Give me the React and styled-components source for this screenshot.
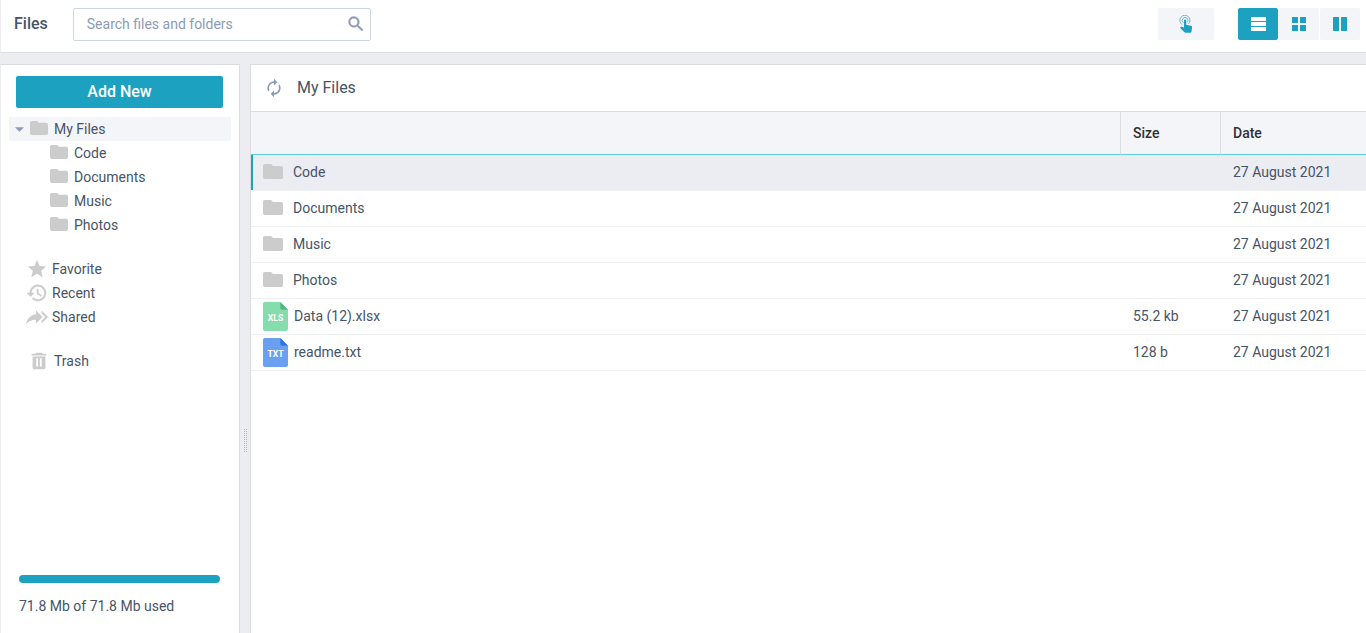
import React, { useState } from "react";
import styled, { createGlobalStyle } from "styled-components";

const color = {
  primary: "#1ca1c1",
  text: "#475466",
  muted: "#8d9bb3",
  line: "#dadee0",
  soft: "#f4f5f9",
  page: "#ebedf0",
  icon: "#cccccc",
};

const GlobalStyle = createGlobalStyle`
  *, *::before, *::after { box-sizing: border-box; }
  body {
    margin: 0;
    background: ${color.page};
    color: ${color.text};
    font-family: Roboto, "Liberation Sans", sans-serif;
    font-size: 14px;
    line-height: 24px;
  }
  button, input { font: inherit; color: inherit; }
`;

const Page = styled.div`
  display: flex;
  flex-direction: column;
  min-height: 100vh;
`;

const Toolbar = styled.header`
  display: flex;
  align-items: center;
  height: 53px;
  padding: 0 6px 4px 13px;
  background: #fff;
  border-bottom: 1px solid ${color.line};
  border-left: 1px solid ${color.page};
`;

const Title = styled.h1`
  margin: 0 25px 0 0;
  font-size: 16px;
  font-weight: 500;
  color: ${color.text};
`;

const SearchBox = styled.label`
  display: flex;
  align-items: center;
  width: 298px;
  height: 33px;
  padding: 0 4px 0 13px;
  border: 1px solid #ccd7e6;
  border-radius: 2px;
  color: ${color.muted};
`;

const SearchInput = styled.input`
  flex: 1;
  min-width: 0;
  padding: 0;
  border: 0;
  outline: 0;
  background: none;
  &::placeholder { color: ${color.muted}; opacity: 1; }
`;

const Actions = styled.div`
  display: flex;
  gap: 24px;
  margin-left: auto;
`;

const ModeGroup = styled.div`
  display: flex;
  gap: 1px;
`;

const ToolButton = styled.button`
  display: flex;
  align-items: center;
  justify-content: center;
  width: ${(p) => (p.$wide ? 56 : 40)}px;
  height: 32px;
  padding: 0;
  border: 0;
  border-radius: 2px;
  background: ${(p) => (p.$active ? color.primary : color.soft)};
  color: ${(p) => (p.$active ? "#fff" : color.primary)};
  cursor: pointer;
`;

const Body = styled.div`
  display: flex;
  flex: 1;
  padding-top: 11px;
`;

const Sidebar = styled.aside`
  display: flex;
  flex-direction: column;
  flex: 0 0 240px;
  padding: 11px 8px 15px;
  background: #fff;
  border: 1px solid ${color.line};
  border-left-color: ${color.page};
  border-bottom: 0;
`;

const AddButton = styled.button`
  height: 32px;
  margin: 0 8px 9px 7px;
  border: 0;
  border-radius: 2px;
  background: ${color.primary};
  color: #fff;
  font-size: 16px;
  font-weight: 500;
  cursor: pointer;
`;

const TreeGroup = styled.nav`
  display: flex;
  flex-direction: column;
  margin-bottom: 20px;
`;

const TreeItem = styled.a`
  display: flex;
  align-items: center;
  gap: 6px;
  height: 24px;
  padding-left: ${(p) => p.$indent}px;
  background: ${(p) => (p.$selected ? color.soft : "none")};
  color: inherit;
  text-decoration: none;
`;

const PlainItem = styled(TreeItem)`
  gap: 4px;
`;

const Icon = styled.svg`
  display: block;
  flex: none;
  fill: currentColor;
  color: ${(p) => p.$color || "inherit"};
`;

const FolderIcon = styled(Icon)`
  margin-bottom: 2px;
`;

const Storage = styled.div`
  display: flex;
  flex-direction: column;
  gap: 11px;
  margin: auto 11px 0 10px;
`;

const Track = styled.div`
  height: 8px;
  border-radius: 4px;
  background: ${color.line};
  overflow: hidden;
`;

const Fill = styled.div`
  height: 100%;
  background: ${color.primary};
`;

const Resizer = styled.div`
  display: flex;
  align-items: center;
  justify-content: center;
  flex: 0 0 10px;
  padding-top: 185px;
  cursor: col-resize;
`;

const Main = styled.main`
  flex: 1;
  min-width: 0;
  background: #fff;
  border-top: 1px solid ${color.line};
  border-left: 1px solid ${color.line};
`;

const PathBar = styled.div`
  display: flex;
  align-items: center;
  gap: 13px;
  height: 46px;
  padding-left: 13px;
  color: ${color.muted};
`;

const IconButton = styled.button`
  padding: 0;
  border: 0;
  background: none;
  cursor: pointer;
`;

const PathTitle = styled.h2`
  margin: 0;
  font-size: 16px;
  font-weight: 400;
  color: ${color.text};
`;

const FileTable = styled.table`
  width: 100%;
  table-layout: fixed;
  border-collapse: separate;
  border-spacing: 0;
`;

const HeadCell = styled.th`
  width: ${(p) => (p.$width ? `${p.$width}px` : "auto")};
  height: 44px;
  padding: 0 12px;
  background: ${color.soft};
  border-top: 1px solid ${color.line};
  border-bottom: 1px solid #5ccbe8;
  border-left: ${(p) => (p.$width ? `1px solid ${color.line}` : 0)};
  color: #313131;
  font-weight: 500;
  text-align: left;
`;

const Row = styled.tr`
  background: ${(p) => (p.$selected ? "#ecedf3" : "#fff")};
  & > td:first-child {
    padding-left: 12px;
    box-shadow: ${(p) => (p.$selected ? `inset 2px 0 ${color.primary}` : "none")};
  }
`;

const Cell = styled.td`
  height: 36px;
  padding: 0 0 1px 13px;
  border-bottom: 1px solid #edeff0;
  white-space: nowrap;
`;

const FileName = styled.span`
  display: flex;
  align-items: center;
  gap: ${(p) => (p.$file ? 6 : 10)}px;
  height: 34px;
`;

const FileBadgeText = styled.text`
  fill: #fff;
  font-family: Roboto, sans-serif;
  font-size: 9px;
  font-weight: 700;
`;

const paths = {
  magnify:
    "M9.5 3A6.5 6.5 0 0 1 16 9.5c0 1.61-.59 3.09-1.56 4.23l.27.27h.79l5 5-1.5 1.5-5-5v-.79l-.27-.27A6.5 6.5 0 1 1 9.5 3m0 2C7 5 5 7 5 9.5S7 14 9.5 14 14 12 14 9.5 12 5 9.5 5Z",
  refresh:
    "M12 6v3l4-4-4-4v3a8 8 0 0 0-8 8c0 1.57.46 3.03 1.24 4.26L6.7 14.8A5.9 5.9 0 0 1 6 12a6 6 0 0 1 6-6m6.76 1.74L17.3 9.2c.44.84.7 1.8.7 2.8a6 6 0 0 1-6 6v-3l-4 4 4 4v-3a8 8 0 0 0 8-8c0-1.57-.46-3.03-1.24-4.26Z",
  star: "M12 17.27 18.18 21l-1.64-7.03L22 9.24l-7.19-.62L12 2 9.19 8.62 2 9.24l5.45 4.73L5.82 21 12 17.27Z",
  history:
    "M13 3a9 9 0 0 0-9 9H1l3.89 3.89.07.14L9 12H6c0-3.87 3.13-7 7-7s7 3.13 7 7-3.13 7-7 7c-1.93 0-3.68-.79-4.94-2.06l-1.42 1.42A8.95 8.95 0 0 0 13 21a9 9 0 0 0 0-18m-1 5v5l4.28 2.54.72-1.21-3.5-2.08V8H12Z",
  share:
    "M11 9V5l7 7-7 7v-4.1c-5 0-8.5 1.6-11 5.1 1-5 4-10 11-11m6-1V5l7 7-7 7v-3l4-4-4-4Z",
  trash:
    "M20 4v2H4V4h4l1-1h6l1 1h4M5 7h14v12a2 2 0 0 1-2 2H7a2 2 0 0 1-2-2V7m4 2v9h2V9H9m4 0v9h2V9h-2Z",
};

function Glyph({ name, size = 22, tint, weight = 0 }) {
  return (
    <Icon width={size} height={size} viewBox="0 0 24 24" $color={tint} aria-hidden="true">
      <path fillRule="evenodd" stroke="currentColor" strokeWidth={weight} d={paths[name]} />
    </Icon>
  );
}

function Folder({ width = 18, height = 14 }) {
  return (
    <FolderIcon width={width} height={height} viewBox="0 0 20 16" preserveAspectRatio="none" $color={color.icon} aria-hidden="true">
      <path d="M8 0H2C.9 0 0 .9 0 2v12a2 2 0 0 0 2 2h16a2 2 0 0 0 2-2V4a2 2 0 0 0-2-2h-8L8 0Z" />
    </FolderIcon>
  );
}

function FileBadge({ type }) {
  const [base, fold] = type === "XLS" ? ["#85dcac", "#52b681"] : ["#6a9ff2", "#2d74e2"];
  return (
    <Icon width="25" height="29" viewBox="0 0 26 30" aria-hidden="true">
      <path fill={base} d="M2 0h16l8 8v20a2 2 0 0 1-2 2H2a2 2 0 0 1-2-2V2C0 .9.9 0 2 0Z" />
      <path fill={fold} d="m18 0 8 8h-6a2 2 0 0 1-2-2V0Z" />
      <FileBadgeText x="13" y="20" textAnchor="middle">{type}</FileBadgeText>
    </Icon>
  );
}

function TouchIcon() {
  return (
    <Icon width="14" height="18" viewBox="0 0 14 18" aria-hidden="true">
      <g fill="none" stroke="#6fb3cc">
        <path d="M3.2 9.7A5.1 5.1 0 1 1 9.5 9" />
        <path d="M4.3 7.6A2.9 2.9 0 1 1 8.2 7.4" />
      </g>
      <path d="M5 5.6a1.1 1.1 0 0 1 2.2 0v4.2l4.6 1c.9.2 1.4.8 1.3 1.7l-.6 4c-.1.8-.6 1.3-1.4 1.3H6.6c-.5 0-.9-.2-1.2-.5L1 12.7l.7-.7c.3-.3.6-.3 1-.2l2.3.6V5.6Z" />
    </Icon>
  );
}

const modeShapes = {
  List: <path d="M0 0h15v4H0zM0 5h15v4H0zM0 10h15v4H0z" />,
  Cards: <path d="M0 0h6v6H0zM8 0h6v6H8zM0 8h6v6H0zM8 8h6v6H8z" />,
  Columns: <path d="M0 0h6v14H0zM8 0h6v14H8z" />,
};

const folders = ["Code", "Documents", "Music", "Photos"];

const rows = [
  ...folders.map((name) => ({ name })),
  { name: "Data (12).xlsx", type: "XLS", size: "55.2 kb" },
  { name: "readme.txt", type: "TXT", size: "128 b" },
];

export default function App() {
  const [mode, setMode] = useState("List");
  const [selected, setSelected] = useState("Code");

  return (
    <Page>
      <GlobalStyle />
      <Toolbar>
        <Title>Files</Title>
        <SearchBox>
          <SearchInput type="text" aria-label="Search" placeholder="Search files and folders" />
          <Glyph name="magnify" size={20} weight={0.5} />
        </SearchBox>
        <Actions>
          <ToolButton type="button" $wide aria-label="Preview">
            <TouchIcon />
          </ToolButton>
          <ModeGroup>
            {Object.keys(modeShapes).map((name) => (
              <ToolButton
                key={name}
                type="button"
                aria-label={name}
                $active={mode === name}
                onClick={() => setMode(name)}
              >
                <Icon width="15" height="14" viewBox="0 0 15 14" aria-hidden="true">
                  {modeShapes[name]}
                </Icon>
              </ToolButton>
            ))}
          </ModeGroup>
        </Actions>
      </Toolbar>

      <Body>
        <Sidebar>
          <AddButton type="button">Add New</AddButton>
          <TreeGroup aria-label="Folders">
            <TreeItem href="#my-files" $selected $indent={6}>
              <Icon width="9" height="5" viewBox="0 0 10 5" $color={color.muted} aria-hidden="true">
                <path d="M0 0h10L5 5Z" />
              </Icon>
              <Folder />
              My Files
            </TreeItem>
            {folders.map((name) => (
              <TreeItem key={name} href={`#${name}`} $indent={41}>
                <Folder />
                {name}
              </TreeItem>
            ))}
          </TreeGroup>
          <TreeGroup aria-label="Collections">
            <PlainItem href="#favorite" $indent={17}>
              <Glyph name="star" tint={color.icon} />
              Favorite
            </PlainItem>
            <PlainItem href="#recent" $indent={17}>
              <Glyph name="history" tint={color.icon} weight={0.5} />
              Recent
            </PlainItem>
            <PlainItem href="#shared" $indent={17}>
              <Glyph name="share" tint={color.icon} />
              Shared
            </PlainItem>
          </TreeGroup>
          <TreeGroup aria-label="Trash">
            <PlainItem href="#trash" $indent={19}>
              <Glyph name="trash" tint={color.icon} />
              Trash
            </PlainItem>
          </TreeGroup>
          <Storage>
            <Track role="progressbar" aria-label="Storage used" aria-valuenow={100}>
              <Fill style={{ width: "100%" }} />
            </Track>
            71.8 Mb of 71.8 Mb used
          </Storage>
        </Sidebar>

        <Resizer role="separator" aria-orientation="vertical">
          <Icon width="3" height="24" viewBox="0 0 3 24" aria-hidden="true">
            <path d="M.5 0v24M2.5 0v24" stroke="#94c3e0" strokeDasharray="1 1" />
          </Icon>
        </Resizer>

        <Main>
          <PathBar>
            <IconButton type="button" aria-label="Refresh">
              <Glyph name="refresh" size={20} tint={color.muted} />
            </IconButton>
            <PathTitle>My Files</PathTitle>
          </PathBar>
          <FileTable>
            <thead>
              <tr>
                <HeadCell scope="col" aria-label="Name" />
                <HeadCell scope="col" $width={100}>Size</HeadCell>
                <HeadCell scope="col" $width={146}>Date</HeadCell>
              </tr>
            </thead>
            <tbody>
              {rows.map((row) => (
                <Row key={row.name} $selected={selected === row.name} onClick={() => setSelected(row.name)}>
                  <Cell>
                    <FileName $file={!!row.type}>
                      {row.type ? <FileBadge type={row.type} /> : <Folder width={20} height={15} />}
                      {row.name}
                    </FileName>
                  </Cell>
                  <Cell>{row.size}</Cell>
                  <Cell>27 August 2021</Cell>
                </Row>
              ))}
            </tbody>
          </FileTable>
        </Main>
      </Body>
    </Page>
  );
}
